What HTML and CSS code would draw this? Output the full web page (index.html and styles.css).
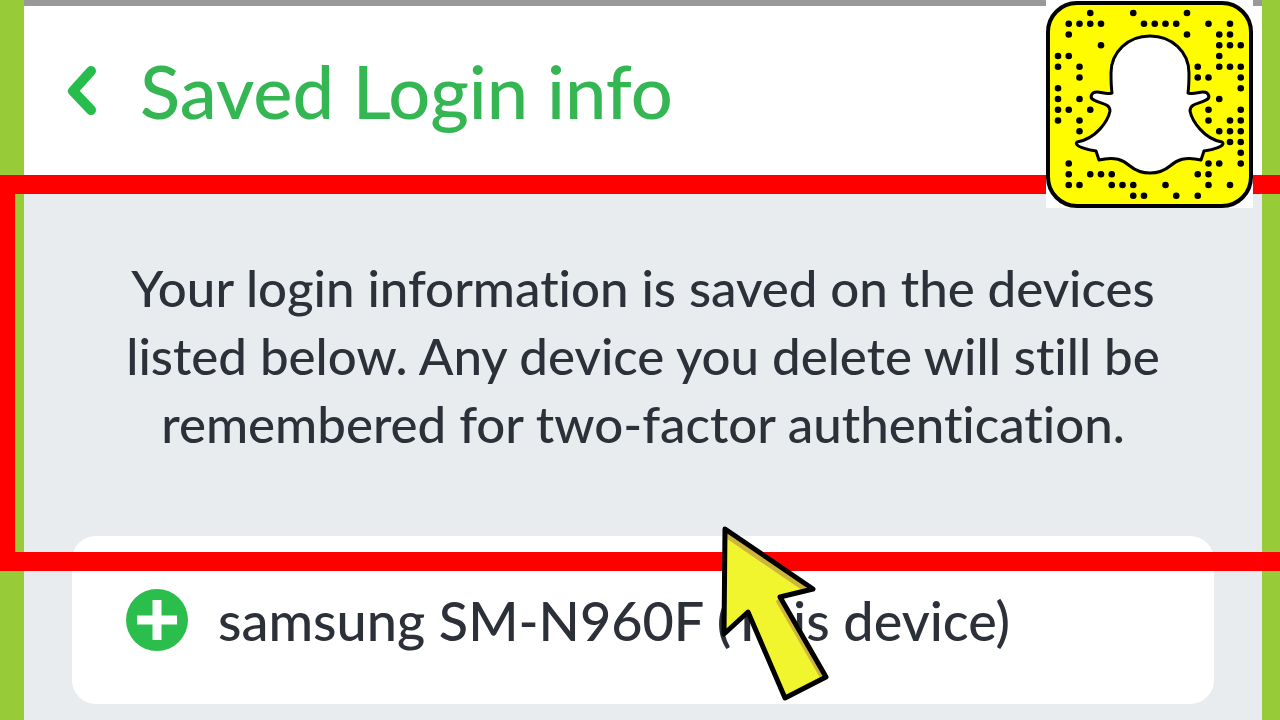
FILE: index.html
```
<!DOCTYPE html>
<html lang="en">
<head>
    <meta charset="utf-8">
    <meta name="viewport" content="width=device-width, initial-scale=1">
    <title>Saved Login info</title>
    <link rel="stylesheet" href="styles.css">
</head>

<body>
    <div class="screen">
        <header class="topbar">
            <button type="button" class="back" aria-label="Back">
                <svg width="32" height="52" viewBox="0 0 32 52"><path d="M25 6L7 26L25 45" /></svg>
            </button>
            <h1>Saved Login info</h1>
        </header>

        <main>
            <p class="intro">
                Your login information is saved on the devices<br>
                listed below. Any device you delete will still be<br>
                remembered for two-factor authentication.
            </p>
            <div class="device">
                <button type="button" class="add" aria-label="Add device">
                    <svg width="62" height="62" viewBox="0 0 62 62">
                        <circle cx="31" cy="31" r="31" />
                        <path d="M31 11V51M11 31H51" />
                    </svg>
                </button>
                <span>samsung SM-N960F (This device)</span>
            </div>
        </main>
    </div>

    <!-- annotations -->
    <div class="highlight"></div>

    <svg class="snapcode" width="207" height="208" viewBox="0 0 207 208">
        <rect width="207" height="208" fill="#fff" />
        <rect x="2" y="3" width="203" height="203" rx="29" fill="#fffc00" stroke="#000" stroke-width="4" />
        <!-- dots sit on an 18 x 18 grid -->
        <g transform="translate(12 13) scale(10.75)">
            <path fill="none" stroke="#000" stroke-width=".62" stroke-linecap="round" d="
                M3 0h0M7 0h0M12 0h0
                M1 1h0M2 1h0M3 1h0M4 1h0M8 1h0M9 1h0M10 1h0M11 1h0M14 1h0M16 1h0
                M1 2h0M12 2h0M15 2h0M16 2h0
                M4 3h0M15 3h0M16 3h0M17 3h0
                M0 4h0M1 4h0M15 4h0
                M0 5h0M2 5h0M13 5h0M15 5h0M16 5h0M17 5h0
                M2 6h0M13 6h0M14 6h0M17 6h0
                M0 7h0M17 7h0
                M0 8h0M2 8h0M15 8h0
                M0 9h0M1 9h0M3 9h0M14 9h0M17 9h0
                M0 10h0M2 10h0M14 10h0M16 10h0M17 10h0
                M2 11h0M15 11h0M16 11h0M17 11h0
                M16 12h0M17 12h0
                M17 13h0
                M1 14h0M14 14h0M15 14h0M17 14h0
                M1 15h0M3 15h0M4 15h0M5 15h0M13 15h0M14 15h0
                M1 16h0M2 16h0M5 16h0M6 16h0M7 16h0M10 16h0M14 16h0M16 16h0
                M7 17h0M8 17h0M11 17h0M13 17h0" />
        </g>
        <path fill="#fff" stroke="#000" stroke-width="3" stroke-linejoin="round" d="
            M104 36C82 36 65 52 65 73C65 80 65 86 66 93C60 95 56 92 51 92
            C45 92 43 98 48 100C54 104 64 103 64 111C62 121 50 139 31 142
            C27 146 42 150 50 151L53 160C69 156 77 160 84 166C90 171 96 173 104 173
            C112 173 118 171 124 166C131 160 139 156 155 160L158 151
            C166 150 181 146 176 142C158 139 146 121 144 111
            C144 103 154 104 160 100C165 98 163 92 157 92C152 92 148 95 142 93
            C143 86 143 80 143 73C143 52 126 36 104 36Z" />
    </svg>

    <svg class="pointer" width="112" height="180" viewBox="0 0 112 180">
        <path d="M6 7L94 67L61 75L107 155L66 176L29 90L5 112Z" fill="#f1f52e" />
        <path d="M8 12L87 66M60 77L104 153" fill="none" stroke="#cdb53e" stroke-width="8" />
        <path d="M6 7L94 67L61 75L107 155L66 176L29 90L5 112Z" fill="none" stroke="#000" stroke-width="5" stroke-linejoin="round" />
    </svg>
</body>
</html>
```
FILE: styles.css
```
html,
body {
    margin: 0;
    padding: 0;
}

body {
    position: relative;
    box-sizing: border-box;
    min-height: 100vh;
    padding: 0 18px 0 24px;
    overflow: hidden;
    background-color: #97cb38;
    color: #2c3038;
    font-family: Lato, "Open Sans", sans-serif;
    font-weight: 500;
    font-variant-ligatures: none;
}

.screen {
    box-sizing: border-box;
    min-height: 100vh;
    border-top: 6px solid #999;
    background-color: #e9ecef;
}

button {
    display: block;
    padding: 0;
    border: none;
    background: none;
    cursor: pointer;
}

svg {
    display: block;
}

.topbar {
    display: flex;
    align-items: center;
    gap: 42px;
    height: 178px;
    padding: 0 42px 8px;
    background-color: #fff;
    box-sizing: border-box;
}

.back path {
    fill: none;
    stroke: #27bd4c;
    stroke-width: 10;
    stroke-linecap: round;
    stroke-linejoin: round;
}

h1 {
    margin: 0;
    color: #34b653;
    font-size: 74px;
    font-weight: 500;
    line-height: 84px;
}

main {
    padding: 70px 48px 16px;
}

.intro {
    margin: 0 0 78px;
    font-size: 51px;
    line-height: 68px;
    text-align: center;
}

.device {
    display: flex;
    align-items: center;
    gap: 30px;
    min-height: 168px;
    padding: 0 54px;
    border-radius: 24px;
    background-color: #fff;
    font-size: 54px;
    box-sizing: border-box;
}

.add circle {
    fill: #2bbe4c;
}

.add path {
    fill: none;
    stroke: #fff;
    stroke-width: 9;
}

/* overlays */
.highlight {
    position: absolute;
    top: 175px;
    left: 0;
    right: 0;
    height: 358px;
    border: 19px solid #f00;
    border-left-width: 15px;
    border-right: none;
}

.snapcode {
    position: absolute;
    top: 0;
    right: 27px;
}

.pointer {
    position: absolute;
    top: 522px;
    left: 719px;
}
```
